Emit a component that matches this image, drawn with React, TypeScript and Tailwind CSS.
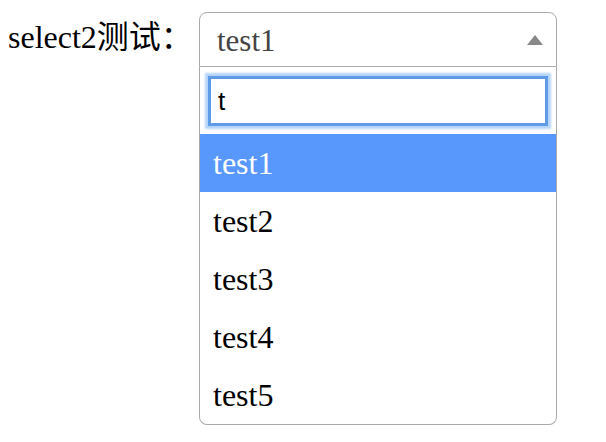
import React from 'react';

const options = ['test1', 'test2', 'test3', 'test4', 'test5'];

function Select2Demo() {
  const selected = 'test1';
  return (
    <div className="w-[358px] font-['Liberation_Serif'] text-[32px]">
      <div className="flex h-[55px] items-center justify-between rounded-t-[8px] border border-[#aaa] bg-white pl-[17px] pr-[13px]">
        <span className="pt-[2px] text-[31px] leading-none text-[#444]">{selected}</span>
        <svg width="16" height="10" viewBox="0 0 16 10" className="mt-[1px]">
          <polygon points="8,0 16,10 0,10" fill="#888" />
        </svg>
      </div>
      <div className="rounded-b-[8px] border border-t-0 border-[#aaa] bg-white">
        <div className="px-[8px] pt-[9px] pb-[8px]">
          <input
            value="t"
            readOnly
            className="block h-[50px] w-full border-[3px] border-[#5f9be8] bg-white pl-[7px] font-['Liberation_Sans'] text-[26px] text-black outline-none shadow-[0_0_2px_3px_#b4d4f8]"
          />
        </div>
        <ul>
          {options.map((o) => (
            <li
              key={o}
              className={
                o === selected
                  ? 'flex h-[58px] items-center bg-[#5897fb] pl-[13px] text-white'
                  : 'flex h-[58px] items-center pl-[13px] text-black'
              }
            >
              {o}
            </li>
          ))}
        </ul>
      </div>
    </div>
  );
}

export default function App() {
  return (
    <div className="flex h-[442px] items-start bg-white pt-[12px] pl-[8px]">
      <label className="w-[191px] pt-[9px] font-['Liberation_Serif','Noto_Sans_CJK_SC'] text-[32px] leading-none text-black">
        select2测试：
      </label>
      <Select2Demo />
    </div>
  );
}
